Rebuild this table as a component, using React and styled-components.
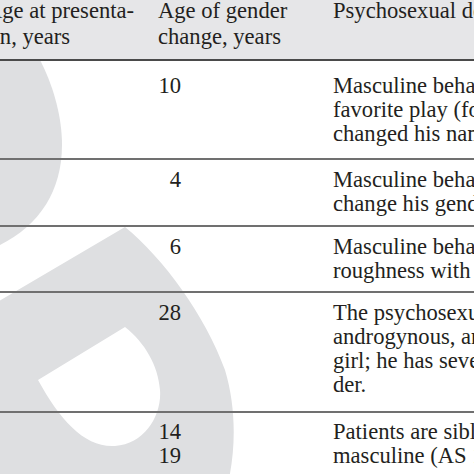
import React from "react";
import styled, { createGlobalStyle } from "styled-components";

const Global = createGlobalStyle`
  html, body {
    margin: 0;
    padding: 0;
    background: #ffffff;
  }
  body {
    font-family: "Liberation Serif", "Times New Roman", serif;
    color: #231f20;
  }
`;

const Page = styled.div`
  position: relative;
  width: 474px;
  height: 474px;
  overflow: hidden;
  background: #ffffff;
`;

const Watermark = styled.svg`
  position: absolute;
  left: 0;
  top: 0;
  width: 474px;
  height: 474px;
  z-index: 0;
`;

const Table = styled.div`
  position: relative;
  z-index: 1;
  margin-left: -14px;
  width: 760px;
  font-size: 22.6px;
  line-height: 24px;
`;

const Row = styled.div`
  display: grid;
  grid-template-columns: 172px 175px 1fr;
  height: ${(p) => p.$h}px;
  padding-top: ${(p) => p.$pad}px;
  box-sizing: border-box;
  border-bottom: 2px solid ${(p) => (p.$head ? "#4a4a4a" : "#707070")};
  background: ${(p) => (p.$head ? "#e6e6e8" : "transparent")};
  line-height: ${(p) => (p.$head ? 26 : 24)}px;
`;

const Cell = styled.div`
  white-space: nowrap;
  margin-top: ${(p) => p.$lift || 0}px;
`;

const Line = styled.div`
  white-space: nowrap;
  margin-left: ${(p) => p.$indent || 0}px;
`;

const Num = styled.div`
  width: 23px;
  text-align: right;
`;

const rows = [
  {
    h: 99,
    pad: 13,
    nums: ["10"],
    text: [
      "Masculine behavior; his",
      "favorite play (football); he",
      "changed his name.",
    ],
  },
  {
    h: 67,
    pad: 8,
    nums: ["4"],
    text: ["Masculine behavior; he wants to", "change his gender."],
  },
  {
    h: 66,
    pad: 8,
    nums: ["6"],
    text: ["Masculine behavior and", "roughness with peers."],
  },
  {
    h: 120,
    pad: 8,
    nums: ["28"],
    text: [
      "The psychosexual development is",
      "androgynous, and he was raised as a",
      "girl; he has severe gender identity disor-",
      "der.",
    ],
  },
  {
    h: 80,
    pad: 7,
    nums: ["14", "19"],
    text: ["Patients are siblings; both are", "masculine (AS 1 and AS 2)."],
  },
];

function App() {
  return (
    <Page>
      <Global />
      <Watermark viewBox="0 0 474 474">
        <path
          d="M0 10 C30 30 62 90 62 145 C62 190 40 225 0 245 Z"
          fill="#dedfe1"
        />
        <path
          fillRule="evenodd"
          fill="#dedfe1"
          d="M125 227 L-40 324 L-40 520 L215 520 C235 480 240 420 225 370 C205 315 163 258 125 227 Z
             M125 327 L38 380 C60 420 85 448 115 446 C145 444 162 415 160 390 C158 365 145 343 125 327 Z"
        />
      </Watermark>
      <Table>
        <Row $head $h={61} $pad={0}>
          <Cell $lift={-2}>
            <Line>Age at presenta-</Line>
            <Line $indent={-10}>tion, years</Line>
          </Cell>
          <Cell $lift={-2}>
            <Line>Age of gender</Line>
            <Line>change, years</Line>
          </Cell>
          <Cell $lift={-2}>
            <Line>Psychosexual development</Line>
          </Cell>
        </Row>
        {rows.map((r, i) => (
          <Row key={i} $h={r.h} $pad={r.pad}>
            <Cell />
            <Cell>
              {r.nums.map((n) => (
                <Num key={n}>{n}</Num>
              ))}
            </Cell>
            <Cell>
              {r.text.map((t) => (
                <Line key={t}>{t}</Line>
              ))}
            </Cell>
          </Row>
        ))}
      </Table>
    </Page>
  );
}

export default App;
